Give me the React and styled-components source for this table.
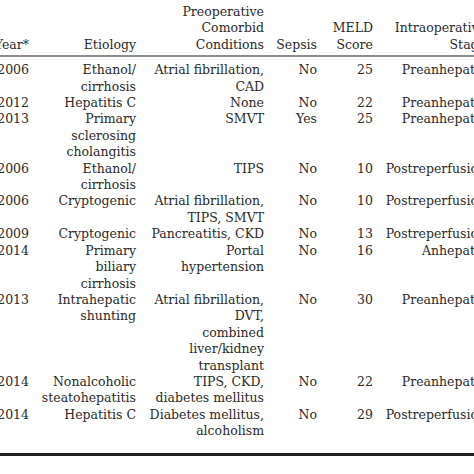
import React from 'react';
import styled, { createGlobalStyle } from 'styled-components';

const GlobalStyle = createGlobalStyle`
  html, body {
    margin: 0;
    padding: 0;
    background: #fff;
  }
  body {
    width: 474px;
    height: 474px;
    overflow: hidden;
  }
`;

const Frame = styled.div`
  width: 474px;
  height: 474px;
  overflow: hidden;
  padding-top: 4px;
  box-sizing: border-box;
`;

const Table = styled.table`
  margin-left: -12px;
  border-collapse: collapse;
  table-layout: fixed;
  width: 498px;
  font-family: 'DejaVu Serif', 'Liberation Serif', serif;
  font-size: 12.5px;
  line-height: 16.4px;
  color: #2a2a2a;
  border-bottom: 3px solid #222;
`;

const HeadCell = styled.th`
  font-weight: normal;
  text-align: right;
  vertical-align: bottom;
  white-space: nowrap;
  padding: 0 0 2px;
  border-bottom: 2px solid #8c8c8c;
`;

const Cell = styled.td`
  text-align: right;
  vertical-align: top;
  white-space: nowrap;
  padding: 0;
`;

const BodyRow = styled.tr`
  &:first-child > td {
    padding-top: 5px;
  }
  &:last-child > td {
    padding-bottom: 13px;
  }
`;

const columns = [
  { key: 'year', title: ['Year*'], width: 41 },
  { key: 'etiology', title: ['Etiology'], width: 107 },
  { key: 'comorbid', title: ['Preoperative', 'Comorbid', 'Conditions'], width: 128 },
  { key: 'sepsis', title: ['Sepsis'], width: 53 },
  { key: 'meld', title: ['MELD', 'Score'], width: 56 },
  { key: 'stage', title: ['Intraoperative', 'Stage'], width: 113 },
];

const rows = [
  { year: '2006', etiology: ['Ethanol/', 'cirrhosis'], comorbid: ['Atrial fibrillation,', 'CAD'], sepsis: 'No', meld: '25', stage: 'Preanhepatic' },
  { year: '2012', etiology: ['Hepatitis C'], comorbid: ['None'], sepsis: 'No', meld: '22', stage: 'Preanhepatic' },
  { year: '2013', etiology: ['Primary', 'sclerosing', 'cholangitis'], comorbid: ['SMVT'], sepsis: 'Yes', meld: '25', stage: 'Preanhepatic' },
  { year: '2006', etiology: ['Ethanol/', 'cirrhosis'], comorbid: ['TIPS'], sepsis: 'No', meld: '10', stage: 'Postreperfusion' },
  { year: '2006', etiology: ['Cryptogenic'], comorbid: ['Atrial fibrillation,', 'TIPS, SMVT'], sepsis: 'No', meld: '10', stage: 'Postreperfusion' },
  { year: '2009', etiology: ['Cryptogenic'], comorbid: ['Pancreatitis, CKD'], sepsis: 'No', meld: '13', stage: 'Postreperfusion' },
  { year: '2014', etiology: ['Primary', 'biliary', 'cirrhosis'], comorbid: ['Portal', 'hypertension'], sepsis: 'No', meld: '16', stage: 'Anhepatic' },
  { year: '2013', etiology: ['Intrahepatic', 'shunting'], comorbid: ['Atrial fibrillation,', 'DVT,', 'combined', 'liver/kidney', 'transplant'], sepsis: 'No', meld: '30', stage: 'Preanhepatic' },
  { year: '2014', etiology: ['Nonalcoholic', 'steatohepatitis'], comorbid: ['TIPS, CKD,', 'diabetes mellitus'], sepsis: 'No', meld: '22', stage: 'Preanhepatic' },
  { year: '2014', etiology: ['Hepatitis C'], comorbid: ['Diabetes mellitus,', 'alcoholism'], sepsis: 'No', meld: '29', stage: 'Postreperfusion' },
];

const Lines = ({ value }) => {
  const list = Array.isArray(value) ? value : [value];
  return list.map((line, i) => (
    <React.Fragment key={i}>
      {i > 0 && <br />}
      {line}
    </React.Fragment>
  ));
};

export default function App() {
  return (
    <Frame>
      <GlobalStyle />
      <Table>
        <colgroup>
          {columns.map((c) => (
            <col key={c.key} style={{ width: c.width }} />
          ))}
        </colgroup>
        <thead>
          <tr>
            {columns.map((c) => (
              <HeadCell key={c.key}>
                <Lines value={c.title} />
              </HeadCell>
            ))}
          </tr>
        </thead>
        <tbody>
          {rows.map((r, i) => (
            <BodyRow key={i}>
              {columns.map((c) => (
                <Cell key={c.key}>
                  <Lines value={r[c.key]} />
                </Cell>
              ))}
            </BodyRow>
          ))}
        </tbody>
      </Table>
    </Frame>
  );
}
